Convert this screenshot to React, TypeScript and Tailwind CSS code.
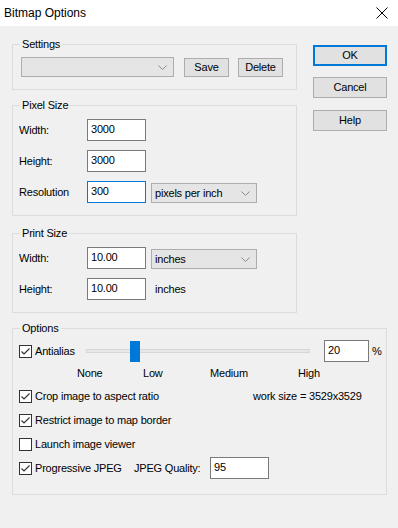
import React from "react";

const Chevron = () => (
  <svg width="9" height="5" viewBox="0 0 9 5" className="shrink-0">
    <path d="M0.5 0.5 L4.5 4.5 L8.5 0.5" fill="none" stroke="#8a8a8a" strokeWidth="1" />
  </svg>
);

const Check = ({ checked }: { checked: boolean }) => (
  <div className="w-[13px] h-[13px] shrink-0 border border-[#333333] bg-white flex items-center justify-center">
    {checked && (
      <svg width="11" height="11" viewBox="0 0 11 11">
        <path d="M1.5 5.5 L4 8 L9.5 2.5" fill="none" stroke="#333333" strokeWidth="1.2" />
      </svg>
    )}
  </div>
);

const Group = ({ label, className, children }: { label: string; className: string; children: React.ReactNode }) => (
  <div className={"relative border border-[#dcdcdc] " + className}>
    <span className="absolute -top-[8px] left-[7px] bg-[#f0f0f0] px-[2px] leading-[14px]">{label}</span>
    {children}
  </div>
);

const Field = ({ value, focused }: { value: string; focused?: boolean }) => (
  <div
    className={
      "w-[59px] h-[22px] shrink-0 bg-white px-[3px] pt-[2px] leading-[14px] border " +
      (focused ? "border-[#0078d7]" : "border-[#7a7a7a]")
    }
  >
    {value}
  </div>
);

const Combo = ({ value, className }: { value: string; className: string }) => (
  <div className={"h-[20px] flex items-center justify-between border border-[#adadad] bg-[#e5e5e5] pl-[3px] pr-[6px] " + className}>
    <span>{value}</span>
    <Chevron />
  </div>
);

const Btn = ({ label, className }: { label: string; className: string }) => (
  <div className={"flex items-center justify-center bg-[#e1e1e1] " + className}>{label}</div>
);

const Row = ({ label, children }: { label: string; children: React.ReactNode }) => (
  <div className="flex items-center h-[22px]">
    <span className="w-[68px] shrink-0">{label}</span>
    {children}
  </div>
);

const CheckRow = ({ checked, label, className }: { checked: boolean; label: string; className?: string }) => (
  <div className={"flex items-center gap-[3px] shrink-0 " + (className || "")}>
    <Check checked={checked} />
    <span>{label}</span>
  </div>
);

export default function App() {
  return (
    <div
      className="w-[398px] h-[528px] flex flex-col bg-[#f0f0f0] text-black text-[11px] tracking-[-0.2px]"
      style={{ fontFamily: '"Liberation Sans", Arial, sans-serif' }}
    >
      <div className="h-[26px] shrink-0 bg-white flex items-center justify-between pl-[4px] pr-[10px] text-[12px] tracking-normal">
        <span>Bitmap Options</span>
        <svg width="12" height="12" viewBox="0 0 12 12">
          <path d="M0.5 0.5 L11.5 11.5 M11.5 0.5 L0.5 11.5" stroke="#000" strokeWidth="1" />
        </svg>
      </div>

      <div className="pl-[12px] w-[387px]">
        <div className="flex">
          <div className="w-[285px] shrink-0 pt-[18px]">
            <Group label="Settings" className="pt-[12px] pb-[12px] pl-[8px] flex items-center">
              <Combo value="" className="w-[153px]" />
              <Btn label="Save" className="ml-[10px] w-[45px] h-[19px] border border-[#adadad]" />
              <Btn label="Delete" className="ml-[9px] w-[45px] h-[19px] border border-[#adadad]" />
            </Group>

            <Group label="Pixel Size" className="mt-[15px] pt-[13px] pb-[12px] pl-[6px] flex flex-col gap-[9px]">
              <Row label="Width:">
                <Field value="3000" />
              </Row>
              <Row label="Height:">
                <Field value="3000" />
              </Row>
              <Row label="Resolution">
                <Field value="300" focused />
                <Combo value="pixels per inch" className="ml-[5px] mt-[2px] w-[106px]" />
              </Row>
            </Group>

            <Group label="Print Size" className="mt-[17px] pt-[13px] pb-[12px] pl-[6px] flex flex-col gap-[9px]">
              <Row label="Width:">
                <Field value="10.00" />
                <Combo value="inches" className="ml-[5px] mt-[2px] w-[106px]" />
              </Row>
              <Row label="Height:">
                <Field value="10.00" />
                <span className="ml-[9px]">inches</span>
              </Row>
            </Group>
          </div>

          <div className="ml-[16px] w-[74px] shrink-0 pt-[19px] flex flex-col">
            <Btn label="OK" className="h-[21px] border-2 border-[#0078d7]" />
            <Btn label="Cancel" className="mt-[11px] h-[21px] border border-[#adadad]" />
            <Btn label="Help" className="mt-[12px] h-[21px] border border-[#adadad]" />
          </div>
        </div>

        <Group label="Options" className="mt-[15px] w-[375px] pt-[11px] pb-[15px] pl-[6px] flex flex-col">
          <div className="flex items-center h-[22px]">
            <CheckRow checked label="Antialias" className="w-[67px]" />
            <div className="relative w-[224px] h-[4px] shrink-0 bg-[#e7e7e7] border border-[#d6d6d6]">
              <div className="absolute left-[43px] -top-[9px] w-[10px] h-[21px] bg-[#0078d7]" />
            </div>
            <div className="ml-[14px]">
              <div className="w-[45px] h-[22px] bg-white border border-[#7a7a7a] px-[3px] pt-[2px] leading-[14px]">20</div>
            </div>
            <span className="ml-[3px]">%</span>
          </div>

          <div className="flex h-[14px] leading-[14px] mt-[4px] pl-[58px]">
            <span className="w-[66px]">None</span>
            <span className="w-[67px]">Low</span>
            <span className="w-[88px]">Medium</span>
            <span>High</span>
          </div>

          <div className="flex items-center h-[22px] mt-[5px]">
            <CheckRow checked label="Crop image to aspect ratio" className="w-[234px]" />
            <span>work size = 3529x3529</span>
          </div>
          <div className="flex items-center h-[22px] mt-[2px]">
            <CheckRow checked label="Restrict image to map border" />
          </div>
          <div className="flex items-center h-[22px] mt-[2px]">
            <CheckRow checked={false} label="Launch image viewer" />
          </div>
          <div className="flex items-center h-[22px] mt-[2px]">
            <CheckRow checked label="Progressive JPEG" className="w-[115px]" />
            <span className="w-[76px] shrink-0">JPEG Quality:</span>
            <Field value="95" />
          </div>
        </Group>
      </div>
    </div>
  );
}
